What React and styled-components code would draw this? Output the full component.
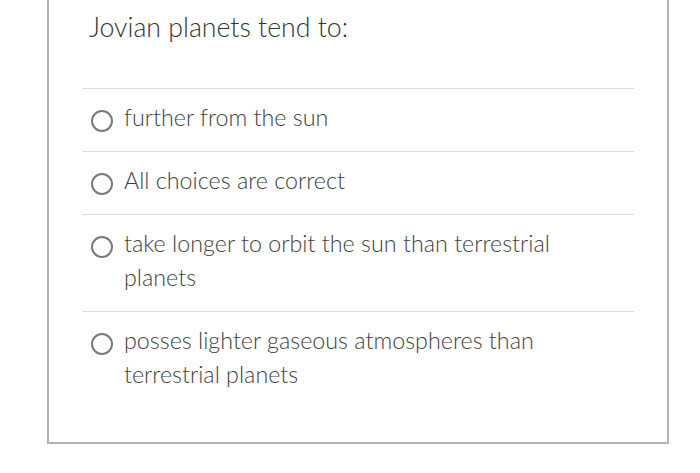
import React from "react";
import styled, { createGlobalStyle } from "styled-components";

const Global = createGlobalStyle`
  html, body { margin: 0; padding: 0; background: #ffffff; }
  body { font-family: Lato, "Open Sans", sans-serif; }
`;

const Page = styled.div`
  padding-left: 47px;
  width: 700px;
  height: 473px;
  box-sizing: border-box;
`;

const Card = styled.section`
  width: 622px;
  box-sizing: border-box;
  border: 2px solid #b3b3b3;
  border-top: none;
  background: #fff;
  padding: 9px 33px 34px 33px;
`;

const Question = styled.h2`
  margin: 0 0 43px 0;
  padding-left: 7px;
  font-family: Lato, sans-serif;
  font-weight: 300;
  font-size: 26.7px;
  line-height: 36px;
  color: #333;
`;

const Answers = styled.div`
  display: flex;
  flex-direction: column;
`;

const Answer = styled.label`
  display: flex;
  align-items: flex-start;
  gap: 11px;
  padding: 11px 0 17px 9px;
  border-top: 1px solid #dcdcdc;
`;

const Radio = styled.span`
  flex: none;
  width: 22px;
  height: 22px;
  margin-top: 10px;
  box-sizing: border-box;
  border: 2px solid #7a7a7a;
  border-radius: 50%;
`;

const AnswerText = styled.span`
  font-family: Lato, sans-serif;
  font-weight: 300;
  font-size: 23.3px;
  line-height: 34px;
  color: #3f3f3f;
  max-width: 440px;
`;

const answers = [
  "further from the sun",
  "All choices are correct",
  "take longer to orbit the sun than terrestrial planets",
  "posses lighter gaseous atmospheres than terrestrial planets",
];

export default function App() {
  return (
    <Page>
      <Global />
      <Card>
        <Question>Jovian planets tend to:</Question>
        <Answers>
          {answers.map((a) => (
            <Answer key={a}>
              <Radio />
              <AnswerText>{a}</AnswerText>
            </Answer>
          ))}
        </Answers>
      </Card>
    </Page>
  );
}
